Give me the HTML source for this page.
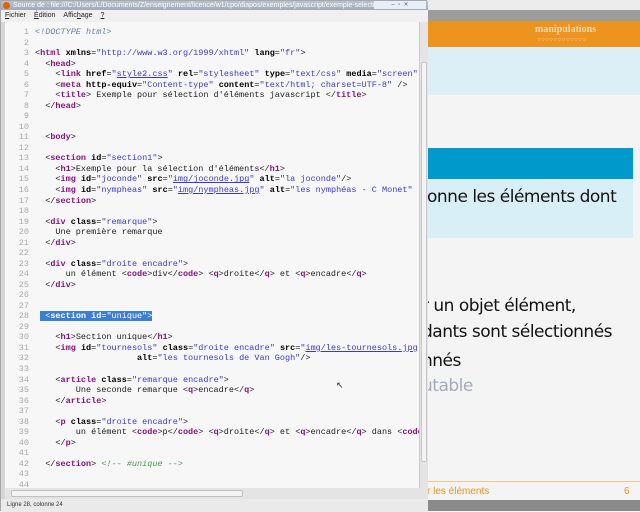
<!DOCTYPE html>
<html><head><meta charset="utf-8"><style>
*{margin:0;padding:0;box-sizing:border-box}
body{width:640px;height:511px;overflow:hidden;background:#f4f4f4;position:relative;font-family:"Liberation Sans",sans-serif}
.abs{position:absolute}
#win{left:0;top:0;width:427px;height:511px;background:#d6d6d6;border:1px solid #a8a8a8}
#title{left:0;top:0;width:427px;height:9px;background:linear-gradient(#b9c3cf,#9fabb9);font-size:7px;color:#fff;line-height:9px;padding-left:12px;white-space:nowrap;overflow:hidden}
#menu{left:0;top:9px;width:427px;height:12px;background:#f0f0f0;font-size:7px;line-height:12px;padding-left:4px;color:#222}
#menu span{margin-right:8px}
#ed{left:4px;top:21px;width:414px;height:466px;background:#f7f7f7;overflow:hidden}
#vs{left:418px;top:21px;width:9px;height:466px;background:#e4e4e4;border-left:1px solid #ccc}
#hs{left:4px;top:487px;width:423px;height:11px;background:#e4e4e4}
#status{left:0;top:498px;width:427px;height:13px;background:#eaeaea;font-size:6px;line-height:13px;padding-left:6px;color:#333}
pre{position:absolute;left:0;top:26px;font-family:"Liberation Mono",monospace;font-size:8.5px;line-height:10.53px;color:#222;white-space:pre}
#gut{left:0;width:24px;text-align:right;color:#aaa;top:5px}
#code{left:30px;top:5px}
.t{color:#881280;font-weight:bold}
.a{color:#000;font-weight:bold}
.v{color:#3b3bc9}
.u{color:#3b3bc9;text-decoration:underline}
.c{color:#4a9a4a;font-style:italic}
.d{color:#6a7fb0;font-style:italic}
.hl{background:#3a7fd5;color:#fff}
.hl b{color:#fff}
.s{position:absolute;font-family:'DejaVu Sans',sans-serif;font-size:17px;letter-spacing:-0.5px;color:#111;white-space:nowrap}
</style></head><body>
<div class="abs" style="left:427px;top:0;width:213px;height:10px;background:#ececec"></div>
<div class="abs" style="left:427px;top:10px;width:213px;height:11px;background:#9c9c9c"></div>
<div class="abs" style="left:427px;top:21px;width:213px;height:26px;background:#ec9320"></div>
<div class="abs" style="left:535px;top:24px;font-family:'Liberation Serif',serif;font-size:10px;color:#f7d6a8;font-weight:bold">manipulations</div>
<div class="abs" style="left:537px;top:37px;font-size:6px;color:#f7d6a8;letter-spacing:0.5px">○○○○○○○○○○○○</div>
<div class="abs" style="left:427px;top:47px;width:213px;height:48px;background:#dceef6"></div>
<div class="abs" style="left:427px;top:148px;width:206px;height:31px;background:#0099cc"></div>
<div class="abs" style="left:427px;top:179px;width:206px;height:59px;background:#d9eff7"></div>
<div class="s" style="left:427px;top:187px">onne les éléments dont</div>
<div class="s" style="left:422px;top:296px">r un objet élément,</div>
<div class="s" style="left:422px;top:322px">dants sont sélectionnés</div>
<div class="s" style="left:422px;top:351px">nnés</div>
<div class="s" style="left:422px;top:376px;color:#a3abb7">utable</div>
<div class="abs" style="left:427px;top:481px;width:213px;height:1px;background:#f4c68e"></div>
<div class="abs" style="left:427px;top:486px;font-size:10px;color:#ec9320;white-space:nowrap">r les éléments</div>
<div class="abs" style="left:624px;top:486px;font-size:10px;color:#ec9320">6</div>
<div class="abs" style="left:427px;top:500px;width:213px;height:11px;background:#8a8a8a"></div>

<div id="win" class="abs">
<div id="title" class="abs">Source de : file:///C:/Users/L/Documents/Z/enseignement/licence/w1/cpo/diapos/exemples/javascript/exemple-selection.html</div>
<div class="abs" style="left:2px;top:1px;width:7px;height:7px;border-radius:50%;background:#e66000"></div>
<div class="abs" style="left:373px;top:0;width:52px;height:8px;background:#e8eef5;font-size:6px;color:#666;text-align:center;line-height:8px">–&nbsp;&nbsp;▫&nbsp;&nbsp;✕</div>
<div id="menu" class="abs"><span><u>F</u>ichier</span><span><u>É</u>dition</span><span>Affic<u>h</u>age</span><span><u>?</u></span></div>
<div id="ed" class="abs">
<pre id="gut" class="abs">1
2
3
4
5
6
7
8
9
10
11
12
13
14
15
16
17
18
19
20
21
22
23
24
25
26
27
28
29
30
31
32
33
34
35
36
37
38
39
40
41
42
43
44</pre>
<pre id="code" class="abs"><span class="d">&lt;!DOCTYPE html&gt;</span>

&lt;<span class="t">html</span> <span class="a">xmlns</span>=<span class="v">"http://www.w3.org/1999/xhtml"</span> <span class="a">lang</span>=<span class="v">"fr"</span>&gt;
  &lt;<span class="t">head</span>&gt;
    &lt;<span class="t">link</span> <span class="a">href</span>=<span class="v">"</span><span class="u">style2.css</span><span class="v">"</span> <span class="a">rel</span>=<span class="v">"stylesheet"</span> <span class="a">type</span>=<span class="v">"text/css"</span> <span class="a">media</span>=<span class="v">"screen"</span>
    &lt;<span class="t">meta</span> <span class="a">http-equiv</span>=<span class="v">"Content-type"</span> <span class="a">content</span>=<span class="v">"text/html; charset=UTF-8"</span> /&gt;
    &lt;<span class="t">title</span>&gt; Exemple pour sélection d'éléments javascript &lt;/<span class="t">title</span>&gt;
  &lt;/<span class="t">head</span>&gt;


  &lt;<span class="t">body</span>&gt;

  &lt;<span class="t">section</span> <span class="a">id</span>=<span class="v">"section1"</span>&gt;
    &lt;<span class="t">h1</span>&gt;Exemple pour la sélection d'éléments&lt;/<span class="t">h1</span>&gt;
    &lt;<span class="t">img</span> <span class="a">id</span>=<span class="v">"joconde"</span> <span class="a">src</span>=<span class="v">"</span><span class="u">img/joconde.jpg</span><span class="v">"</span> <span class="a">alt</span>=<span class="v">"la joconde"</span>/&gt;
    &lt;<span class="t">img</span> <span class="a">id</span>=<span class="v">"nympheas"</span> <span class="a">src</span>=<span class="v">"</span><span class="u">img/nympheas.jpg</span><span class="v">"</span> <span class="a">alt</span>=<span class="v">"les nymphéas - C Monet"</span>
  &lt;/<span class="t">section</span>&gt;

  &lt;<span class="t">div</span> <span class="a">class</span>=<span class="v">"remarque"</span>&gt;
    Une première remarque
  &lt;/<span class="t">div</span>&gt;

  &lt;<span class="t">div</span> <span class="a">class</span>=<span class="v">"droite encadre"</span>&gt;
      un élément &lt;<span class="t">code</span>&gt;div&lt;/<span class="t">code</span>&gt; &lt;<span class="t">q</span>&gt;droite&lt;/<span class="t">q</span>&gt; et &lt;<span class="t">q</span>&gt;encadre&lt;/<span class="t">q</span>&gt;
  &lt;/<span class="t">div</span>&gt;


 <span class="hl"> &lt;<b>section</b> <b>id</b>="unique"&gt;</span>

    &lt;<span class="t">h1</span>&gt;Section unique&lt;/<span class="t">h1</span>&gt;
    &lt;<span class="t">img</span> <span class="a">id</span>=<span class="v">"tournesols"</span> <span class="a">class</span>=<span class="v">"droite encadre"</span> <span class="a">src</span>=<span class="v">"</span><span class="u">img/les-tournesols.jpg</span>
                    <span class="a">alt</span>=<span class="v">"les tournesols de Van Gogh"</span>/&gt;

    &lt;<span class="t">article</span> <span class="a">class</span>=<span class="v">"remarque encadre"</span>&gt;
        Une seconde remarque &lt;<span class="t">q</span>&gt;encadre&lt;/<span class="t">q</span>&gt;
    &lt;/<span class="t">article</span>&gt;

    &lt;<span class="t">p</span> <span class="a">class</span>=<span class="v">"droite encadre"</span>&gt;
        un élément &lt;<span class="t">code</span>&gt;p&lt;/<span class="t">code</span>&gt; &lt;<span class="t">q</span>&gt;droite&lt;/<span class="t">q</span>&gt; et &lt;<span class="t">q</span>&gt;encadre&lt;/<span class="t">q</span>&gt; dans &lt;<span class="t">code</span>&gt;
    &lt;/<span class="t">p</span>&gt;

  &lt;/<span class="t">section</span>&gt; <span class="c">&lt;!-- #unique --&gt;</span>

</pre>
</div>
<div id="vs" class="abs"><div class="abs" style="left:1px;top:40px;width:6px;height:400px;background:#f4f4f4;border:1px solid #c8c8c8;border-radius:2px"></div></div>
<div id="hs" class="abs"><div class="abs" style="left:6px;top:2px;width:232px;height:7px;background:#f4f4f4;border:1px solid #c0c0c0;border-radius:2px"></div></div>
<div id="status" class="abs">Ligne 28, colonne 24</div>
</div>
<div class="abs" style="left:336px;top:381px;font-size:9px;color:#333;line-height:9px">↖</div>
</body></html>
